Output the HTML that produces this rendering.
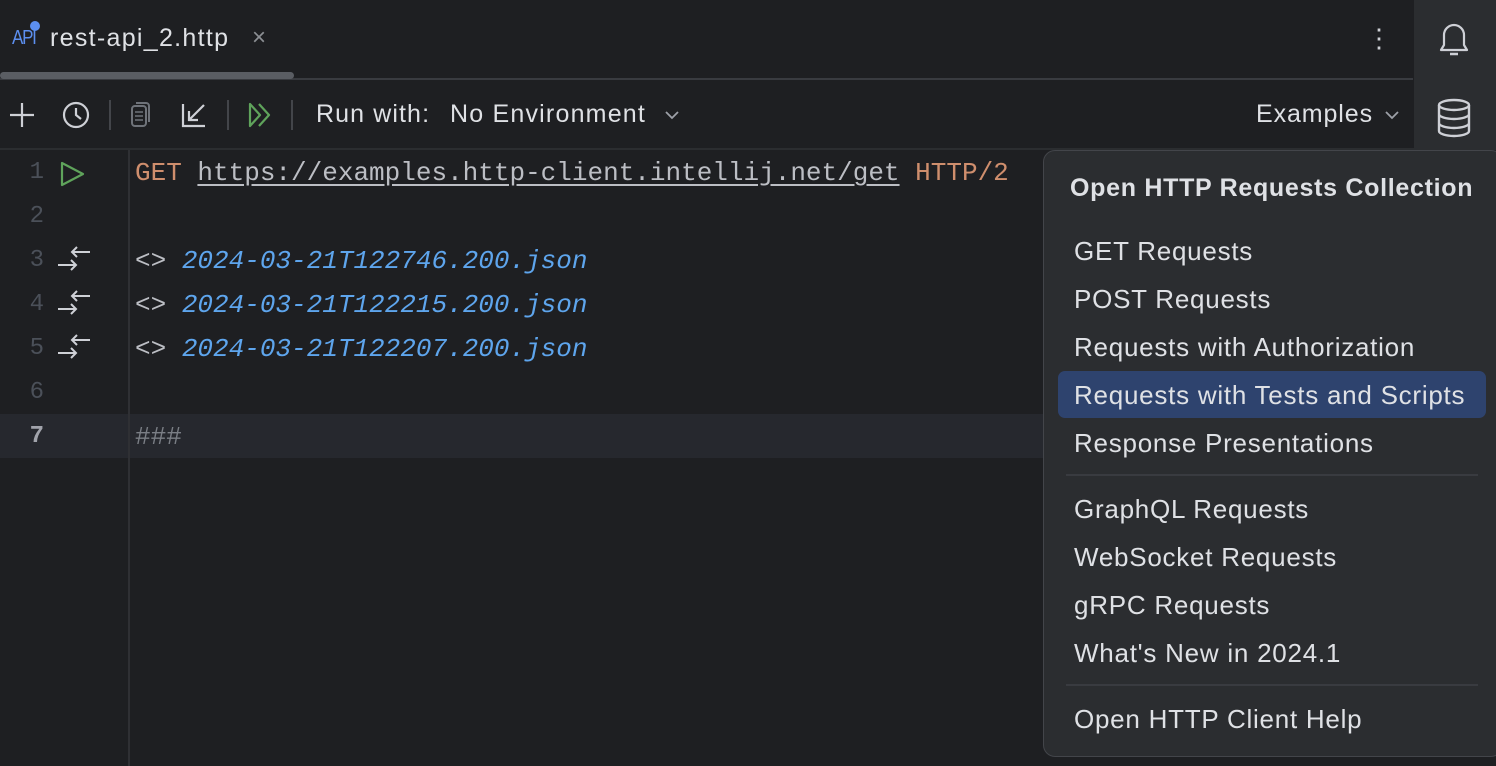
<!DOCTYPE html>
<html><head><meta charset="utf-8"><style>
*{margin:0;padding:0;box-sizing:border-box}
body{width:1496px;height:766px;background:#1e1f22;position:relative;overflow:hidden;font-family:"Liberation Sans",sans-serif;color:#dfe1e5}
.a{position:absolute;white-space:nowrap}
.mono{font-family:"Liberation Mono",monospace;font-size:26px;line-height:44px}
.ln{position:absolute;left:0;width:44px;text-align:right;color:#4b5059;font-family:"Liberation Mono",monospace;font-size:24px;line-height:44px}
.mi{position:absolute;left:1074px;font-size:26px;line-height:48px;color:#dfe1e5;letter-spacing:0.75px}
</style></head><body>
<div class="a" style="left:1414px;top:0;width:82px;height:150px;background:#2b2d30"></div>
<div class="a" style="left:12px;top:27px;font-size:20px;color:#5c8ff0;letter-spacing:-1.5px;transform:scaleX(0.85);transform-origin:left">API</div>
<div class="a" style="left:30px;top:21px;width:10px;height:10px;border-radius:50%;background:#5c8ff0"></div>
<div class="a" style="left:50px;top:24px;font-size:25px;color:#dfe1e5;letter-spacing:1.3px">rest-api_2.http</div>
<div class="a" style="left:252px;top:24px;font-size:24px;color:#8c8f94">×</div>
<div class="a" style="left:1366px;top:24px;font-size:26px;color:#ced0d6;line-height:28px;width:16px;text-align:center">⋮</div>
<div class="a" style="left:0;top:78px;width:1413px;height:2px;background:#393b40"></div>
<div class="a" style="left:0;top:72px;width:294px;height:7px;border-radius:4px;background:#5a5d63"></div>
<svg class="a" style="left:1436px;top:18px" width="36" height="40" viewBox="0 0 36 40"><path d="M5 32 H31 L28 27 V17 A10 10 0 0 0 8 17 V27 Z" fill="none" stroke="#ced0d6" stroke-width="2.2" stroke-linejoin="round"/><path d="M14 36 H22" stroke="#ced0d6" stroke-width="2.5"/></svg>
<svg class="a" style="left:1436px;top:98px" width="36" height="40" viewBox="0 0 36 40"><ellipse cx="18" cy="7" rx="15" ry="5" fill="none" stroke="#ced0d6" stroke-width="2.4"/><path d="M3 7 V33 A15 5 0 0 0 33 33 V7 M3 16 A15 5 0 0 0 33 16 M3 25 A15 5 0 0 0 33 25" fill="none" stroke="#ced0d6" stroke-width="2.4"/></svg>
<svg class="a" style="left:8px;top:100px" width="290" height="30" viewBox="0 0 290 30">
<path d="M14 3 V27 M2 15 H26" stroke="#ced0d6" stroke-width="2.2"/>
<circle cx="68" cy="15" r="12" fill="none" stroke="#ced0d6" stroke-width="2.2"/><path d="M68 8 V15 L73 19" fill="none" stroke="#ced0d6" stroke-width="2.2"/>
<path d="M102 -3 V38" stroke="#43454a" stroke-width="2"/>
<rect x="124" y="6" width="14" height="20" rx="3" fill="none" stroke="#6f737a" stroke-width="2"/><path d="M128 3 h10 a3 3 0 0 1 3 3 v16" fill="none" stroke="#6f737a" stroke-width="2"/><path d="M127 12h8M127 16h8M127 20h8" stroke="#6f737a" stroke-width="1.5"/>
<path d="M175 4 V26 H197 M196 5 L181 20 M181 11 V20 H190" fill="none" stroke="#ced0d6" stroke-width="2.2"/>
<path d="M220 -3 V38" stroke="#43454a" stroke-width="2"/>
<path d="M242 4 L252 15 L242 26 Z M251 4 L261 15 L251 26" fill="none" stroke="#5fa35b" stroke-width="2.2" stroke-linejoin="round"/>
<path d="M284 -3 V38" stroke="#43454a" stroke-width="2"/>
</svg>
<div class="a" style="left:316px;top:100px;font-size:25px;color:#dfe1e5;letter-spacing:1.1px">Run with:</div>
<div class="a" style="left:450px;top:100px;font-size:25px;color:#dfe1e5;letter-spacing:1.2px">No Environment</div>
<svg class="a" style="left:664px;top:109px" width="16" height="12"><path d="M2 3 L8 9 L14 3" fill="none" stroke="#9da0a8" stroke-width="1.8"/></svg>
<div class="a" style="left:1256px;top:100px;font-size:25px;color:#dfe1e5;letter-spacing:0.9px">Examples</div>
<svg class="a" style="left:1384px;top:109px" width="16" height="12"><path d="M2 3 L8 9 L14 3" fill="none" stroke="#9da0a8" stroke-width="1.8"/></svg>
<div class="a" style="left:0;top:148px;width:1414px;height:2px;background:#2b2d30"></div>
<div class="a" style="left:0;top:414px;width:1496px;height:44px;background:#26282e"></div>
<div class="a" style="left:128px;top:150px;width:2px;height:616px;background:#2f3034"></div>
<div class="ln" style="top:151px">1</div><div class="ln" style="top:195px">2</div><div class="ln" style="top:239px">3</div><div class="ln" style="top:283px">4</div><div class="ln" style="top:327px">5</div><div class="ln" style="top:371px">6</div><div class="ln" style="top:415px;color:#a1a3ab;font-weight:bold">7</div>
<svg class="a" style="left:60px;top:161px" width="26" height="26"><path d="M2 2 L23 13 L2 24 Z" fill="none" stroke="#5fa35b" stroke-width="2.2" stroke-linejoin="round"/></svg>
<svg class="a" style="left:56px;top:246px" width="36" height="120"><g fill="none" stroke="#ced0d6" stroke-width="2"><path d="M34 6 H16 M21 1 L16 6 L21 11 M2 19 H20 M15 14 L20 19 L15 24"/><path transform="translate(0,44)" d="M34 6 H16 M21 1 L16 6 L21 11 M2 19 H20 M15 14 L20 19 L15 24"/><path transform="translate(0,88)" d="M34 6 H16 M21 1 L16 6 L21 11 M2 19 H20 M15 14 L20 19 L15 24"/></g></svg>
<div class="a mono" style="left:135px;top:151px"><span style="color:#cf8e6d">GET</span> <span style="color:#bcbec4;text-decoration:underline;text-underline-offset:4px">https://examples.http-client.intellij.net/get</span> <span style="color:#cf8e6d">HTTP/2</span></div>
<div class="a mono" style="left:135px;top:239px;color:#bcbec4">&lt;&gt; <i style="color:#5ea5ed">2024-03-21T122746.200.json</i></div>
<div class="a mono" style="left:135px;top:283px;color:#bcbec4">&lt;&gt; <i style="color:#5ea5ed">2024-03-21T122215.200.json</i></div>
<div class="a mono" style="left:135px;top:327px;color:#bcbec4">&lt;&gt; <i style="color:#5ea5ed">2024-03-21T122207.200.json</i></div>
<div class="a mono" style="left:135px;top:415px;color:#7a7e85">###</div>
<div class="a" style="left:1043px;top:150px;width:460px;height:607px;background:#2b2d30;border:1px solid #43454a;border-radius:12px"></div>
<div class="a" style="left:1070px;top:174px;font-size:25px;font-weight:bold;color:#dfe1e5;letter-spacing:0.7px">Open HTTP Requests Collection</div>
<div class="a" style="left:1058px;top:371px;width:428px;height:47px;background:#2e436e;border-radius:7px"></div>
<div class="mi" style="top:227px">GET Requests</div>
<div class="mi" style="top:275px">POST Requests</div>
<div class="mi" style="top:323px">Requests with Authorization</div>
<div class="mi" style="top:371px">Requests with Tests and Scripts</div>
<div class="mi" style="top:419px">Response Presentations</div>
<div class="a" style="left:1066px;top:474px;width:412px;height:2px;background:#393b40"></div>
<div class="mi" style="top:485px">GraphQL Requests</div>
<div class="mi" style="top:533px">WebSocket Requests</div>
<div class="mi" style="top:581px">gRPC Requests</div>
<div class="mi" style="top:629px">What's New in 2024.1</div>
<div class="a" style="left:1066px;top:684px;width:412px;height:2px;background:#393b40"></div>
<div class="mi" style="top:695px">Open HTTP Client Help</div>
</body></html>
